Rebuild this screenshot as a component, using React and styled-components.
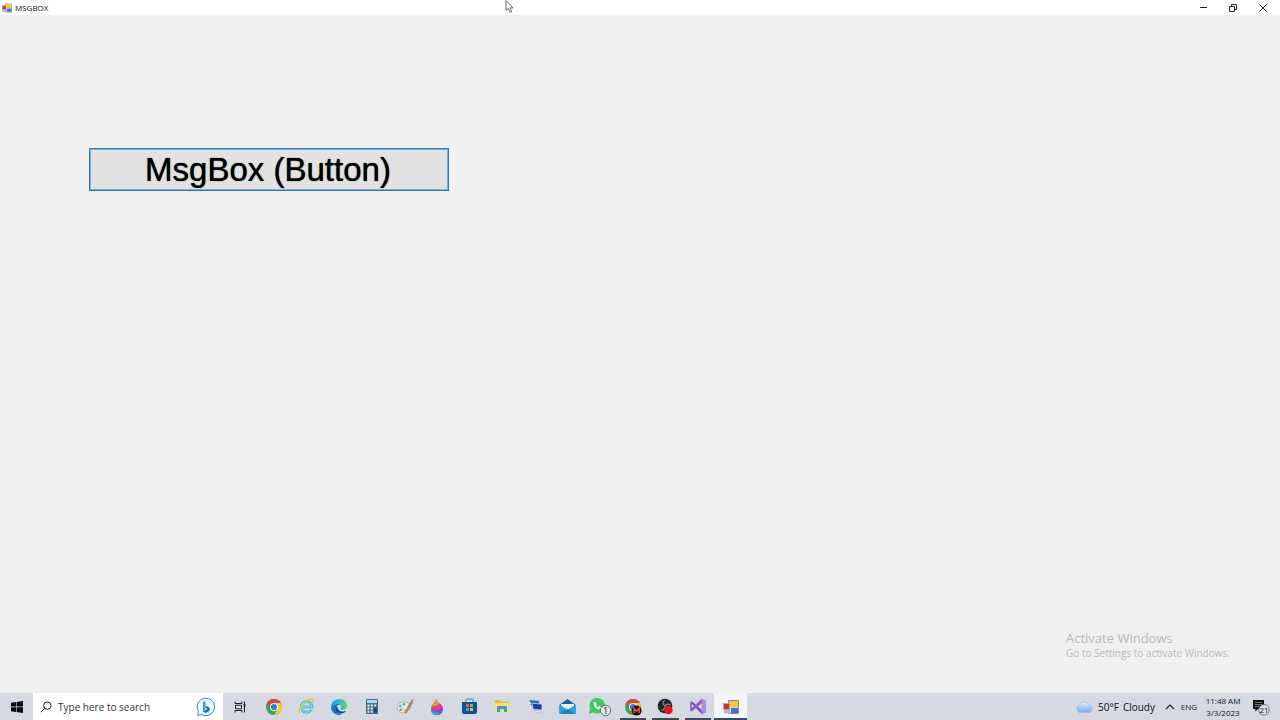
import React, { useState } from 'react';
import styled, { createGlobalStyle } from 'styled-components';

const GlobalStyle = createGlobalStyle`
  * {
    box-sizing: border-box;
  }
  body {
    margin: 0;
    background: #f0f0f0;
    font-family: "Open Sans", "Noto Sans", sans-serif;
    color: #111;
  }
  button, input {
    font: inherit;
    color: inherit;
    border: none;
    margin: 0;
    padding: 0;
    background: transparent;
  }
  svg {
    display: block;
    flex: none;
  }
`

const Desktop = styled.div`
  display: flex;
  flex-direction: column;
  min-height: 100vh;
  position: relative;
`

const TitleBar = styled.header`
  display: flex;
  align-items: center;
  height: 15px;
  padding-left: 2px;
  gap: 3px;
  background: #fff;
`

const Title = styled.h1`
  flex: 1;
  margin: 0;
  font-size: 8px;
  line-height: 14px;
  font-weight: normal;
`

const WindowButton = styled.button`
  display: flex;
  align-items: center;
  justify-content: center;
  width: 30px;
  height: 14px;
`

const WindowButtons = styled.div`
  display: flex;
  padding-right: 2px;
`

const Form = styled.main`
  flex: 1;
  position: relative;
  padding: 133px 89px;
  background: #f0f0f0;
`

const MsgButton = styled.button`
  width: 360px;
  height: 43px;
  padding-right: 2px;
  border: 1px solid #2a7ab2;
  box-shadow: inset 0 0 0 1px #7fb0d0;
  background: #e2e2e2;
  color: #000;
  font-family: "Liberation Sans", Arial, sans-serif;
  font-size: 33px;
  line-height: 40px;
  text-shadow: 0 0 1px #000;
`

const Watermark = styled.aside`
  position: absolute;
  right: 56px;
  bottom: 33px;
  width: 158px;
  color: #b9b9b9;
  font-size: 10px;
  line-height: 14px;
  white-space: nowrap;
  strong {
    display: block;
    font-size: 13px;
    line-height: 16px;
    font-weight: normal;
  }
`

const Pointer = styled.svg`
  position: absolute;
  left: 505px;
  top: 0;
`

const Taskbar = styled.footer`
  display: flex;
  height: 27px;
  background: #d6d9e2;
`

const StartButton = styled.button`
  display: flex;
  align-items: center;
  justify-content: center;
  width: 33px;
`

const SearchBox = styled.label`
  display: flex;
  align-items: center;
  width: 190px;
  padding: 0 7px;
  gap: 6px;
  background: #fff;
  input {
    flex: 1;
    min-width: 0;
    font-size: 10px;
    line-height: 16px;
    outline: none;
  }
  input::placeholder {
    color: #333;
    opacity: 1;
  }
`

const AppList = styled.nav`
  display: grid;
  grid-template-columns: repeat(15, 1fr);
  width: 489px;
  margin-left: 2px;
`

const AppButton = styled.button`
  display: flex;
  align-items: center;
  justify-content: center;
  margin: 0 ${props => (props.$active || !props.$running ? '0' : '3px')};
  border-bottom: 2px solid ${props => (props.$running ? '#3d4a5c' : 'transparent')};
  padding-top: 2px;
  background: ${props => (props.$active ? '#f3f5f8' : 'transparent')};
`

const Tray = styled.div`
  display: flex;
  align-items: center;
  margin-left: auto;
  padding-right: 9px;
  font-size: 10px;
  line-height: 16px;
`

const Weather = styled.button`
  display: flex;
  align-items: center;
  gap: 4px;
  margin-right: 10px;
`

const Language = styled.button`
  width: 28px;
  font-size: 8px;
`

const Clock = styled.time`
  width: 40px;
  margin-right: 10px;
  font-size: 8px;
  line-height: 12px;
  text-align: center;
  white-space: nowrap;
`

const TrayButton = styled.button`
  display: flex;
  align-items: center;
`

const FormIcon = ({ size }) => (
  <svg width={size} height={size} viewBox="0 0 16 16">
    <path d="M5.5 1.5h10v13h-10z" fill="#d9dce0" stroke="#8b8b86" />
    <path d="M6.5 2h8.5v6H6.5z" fill="#f3c83d" />
    <path d="M8 9h7v5H8z" fill="#3f73cc" />
    <path d="M.5 4.5h6v6h-6z" fill="#c9332c" stroke="#b9a09e" />
    <path d="M1 11h6v3.5H1z" fill="#b5b9c2" />
  </svg>
)

const BingIcon = () => (
  <svg width="20" height="20" viewBox="0 0 20 20">
    <path d="M1.6 18.4l.7-4.2A8.7 8.7 0 1 1 6 17.7z" fill="#eef8fd" stroke="#3188cb" />
    <path d="M7 4l2.4 1v7.6L7 14.5z" fill="#24a6dc" />
    <path d="M7 14.5l3.4-2-1.2-3.6c2.6.3 4.6 1.3 4.6 3.3 0 2-2.6 3.5-4.8 3.5z" fill="#1769c7" />
    <path d="M9.4 11l1.9.9-1.9 1.2z" fill="#eef8fd" />
  </svg>
)

const ChromeIcon = ({ badge }) => (
  <svg width="18" height="18" viewBox="0 0 18 18">
    <circle cx="9" cy="9" r="8" fill="#35a853" />
    <path d="M2.1 5A8 8 0 0 1 15.9 5L9 5.3 5.6 11z" fill="#e0433a" />
    <path d="M15.9 5A8 8 0 0 1 9 17l3.5-6L9 5z" fill="#f6c92d" />
    <circle cx="9" cy="9" r="4" fill="#fff" />
    <circle cx="9" cy="9" r="3.1" fill="#3977df" />
    {badge && (
      <>
        <circle cx="12.6" cy="12.6" r="5" fill="#21130e" />
        <path d="M10 15.2v-4.8l2.6 2.8 2.6-2.8v4.8" fill="none" stroke="#e8552c" strokeWidth="1.5" />
      </>
    )}
  </svg>
)

const ExplorerIcon = () => (
  <svg width="17" height="17" viewBox="0 0 17 17">
    <path d="M13.3 11.6A5.4 5.4 0 1 1 14 8.8H5" fill="none" stroke="#45b8e5" strokeWidth="2.8" />
    <path d="M13.3 11.6A5.4 5.4 0 1 1 14 8.8H5" fill="none" stroke="#b5e7f8" strokeWidth=".7" />
    <path d="M2.1 14.8C-1.1 12.1 7.7 1.2 13.6 1c2.1 0 2.1 1.8 1 4" fill="none" stroke="#e6c23c" strokeWidth="1.4" />
  </svg>
)

const EdgeIcon = () => (
  <svg width="18" height="18" viewBox="0 0 18 18">
    <defs>
      <linearGradient id="edgeTop" x1="0" x2="1">
        <stop offset="0" stopColor="#1695d8" />
        <stop offset=".5" stopColor="#2bbfd0" />
        <stop offset="1" stopColor="#65d45c" />
      </linearGradient>
    </defs>
    <path d="M1 9.5A8 8 0 0 1 9 1c5 0 8 3.3 8 6.7 0 2.7-2 4.2-4.5 4.2-2 0-2.6-.8-1.8-1.8C12 8 9.5 6 6.5 6 3.7 6 1.5 7.5 1 9.5z" fill="url(#edgeTop)" />
    <path d="M1 9.4C1.5 7.5 3.8 6 6.5 6c1.3 0 2.5.4 3.3 1C7 7.1 5.6 9 6 11.5c.4 2.5 2.6 5 6 5A8 8 0 0 1 1 9.4z" fill="#147acb" />
    <path d="M7.2 8.2c-1.8 1-2 3.2-.7 5.3 1.6 2.5 4.8 3.5 9.3.1.3-.2 0-.6-.3-.5-3.9 1.5-8-.6-8.3-4.9z" fill="#124d91" />
  </svg>
)

const CalculatorIcon = () => (
  <svg width="14" height="17" viewBox="0 0 14 17">
    <path d="M1 1h12v15H1z" fill="#4d6e83" />
    <path d="M2 2h10v3H2z" fill="#9de1f2" />
    <path d="M2.5 6.5h2v2h-2zm3.3 0h2v2h-2zm3.4 0h2v2h-2zM2.5 9.5h2v2h-2zm3.3 0h2v2h-2zM2.5 12.7h2v2h-2zm3.3 0h2v2h-2z" fill="#e2edf2" />
    <path d="M9.2 9.5h2.5v5.2H9.2z" fill="#173f70" />
  </svg>
)

const PaintIcon = () => (
  <svg width="18" height="17" viewBox="0 0 18 17">
    <path d="M1.3 10.8C0 7 4 3.8 8.5 4c4 .1 6.6 2.4 6.3 5.4-.3 3-3 2.2-4 3.1-1 .8.3 2.2-2.6 2.5-3 .3-6-1.5-6.9-4.2z" fill="#d9eaf0" stroke="#8ca9b5" strokeWidth=".7" />
    <circle cx="4.3" cy="8" r="1.3" fill="#65a6d8" />
    <circle cx="8" cy="6.2" r="1.2" fill="#63ad68" />
    <circle cx="4.8" cy="11.7" r="1.3" fill="#d57c50" />
    <circle cx="8.3" cy="12.5" r="1.1" fill="#d8bf4c" />
    <path d="M8.8 14.5L14 4.8 16.8 1l-.8 4.5L10.4 15z" fill="#ba8c5a" stroke="#846548" strokeWidth=".5" />
  </svg>
)

const DropIcon = () => (
  <svg width="14" height="18" viewBox="0 0 14 18">
    <path d="M6 1C5 4 1 7 1 11.2a6 6 0 0 0 12 0C13 7 8 5 6 1z" fill="#2cacdf" />
    <path d="M6 1C5.3 3.5 3 5.8 1.8 8.3 4 8.6 8 7.7 9.8 5.2 8 4 6.7 3 6 1z" fill="#ee9440" />
    <path d="M1.8 8.3C4 8.6 8 7.7 9.8 5.2c1.4 1.4 2.6 2.8 3 4.6C10 12 5 13 1 11.4c0-1 .3-2.2.8-3.1z" fill="#e33e78" />
    <path d="M1 11.4C5 13 10 12 12.8 9.8c.9 3.4-1.6 6.2-4 7.1C4.5 16.5 1.3 14 1 11.4z" fill="#8a46cc" />
    <path d="M1 11.4c.7 2.5 4 3.6 8.5 2.8-.4 1.4-1.8 2.7-3.5 3A6 6 0 0 1 1 11.4z" fill="#2cacdf" />
  </svg>
)

const StoreIcon = () => (
  <svg width="17" height="17" viewBox="0 0 17 17">
    <path d="M5 5V2.5C5 1.5 5.5 1 6.5 1h4c1 0 1.5.5 1.5 1.5V5" fill="none" stroke="#45afe0" strokeWidth="1.4" />
    <path d="M1 4h15v10q0 2-2 2H3q-2 0-2-2z" fill="#14518a" />
    <path d="M5 6h3v3H5z" fill="#ec5840" />
    <path d="M9 6h3v3H9z" fill="#80c341" />
    <path d="M5 10h3v3H5z" fill="#36aae3" />
    <path d="M9 10h3v3H9z" fill="#f5bd38" />
  </svg>
)

const FolderIcon = () => (
  <svg width="16" height="15" viewBox="0 0 16 15">
    <path d="M1 1h5l1 1.7h8V12H1z" fill="#e9b83f" />
    <path d="M1 4h14v8H1z" fill="#ffdf75" />
    <path d="M3 13V8q0-1 1-1h8q1 0 1 1v5h-3v-3H6v3z" fill="#4199c5" />
  </svg>
)

const RemoteIcon = () => (
  <svg width="17" height="17" viewBox="0 0 17 17">
    <path d="M1 1l12 1.3v7.2L2 8z" fill="#c4d7f0" />
    <path d="M2.5 2l9.5 1.1v5.3L4 7.2z" fill="#416cba" />
    <path d="M5 5.3l10 .8v6L6 11.2z" fill="#1d429b" stroke="#d7e2f1" strokeWidth=".7" />
    <path d="M7 12.3l7 .6 1.5 2.3-7-.8z" fill="#ecf0f7" stroke="#8a9cb8" strokeWidth=".6" />
    <path d="M1 4.8l3 .4M2 9.6l3 .4" stroke="#eef5fb" />
  </svg>
)

const MailIcon = () => (
  <svg width="17" height="17" viewBox="0 0 17 17">
    <path d="M.5 6.8L8.5 1l8 5.8V16H.5z" fill="#17649d" />
    <path d="M2 6h13v6H2z" fill="#e7f4fa" />
    <path d="M.5 6.8l8 5 8-5V16H.5z" fill="#28a1dc" />
    <path d="M.5 16l8-5 8 5z" fill="#1a86c7" />
  </svg>
)

const WhatsAppIcon = () => (
  <svg width="24" height="20" viewBox="0 0 24 20">
    <path d="M.8 17l1.4-5a7.8 7.8 0 1 1 3.4 3.6z" fill="#3ecb5a" />
    <path d="M6 5.2l1.6 2-.6 1.2c.6 1.4 1.6 2.4 3 3l1.1-1 2.2 1.1" fill="none" stroke="#fff" strokeWidth="2.2" />
    <circle cx="17.5" cy="13.5" r="5.2" fill="#dfe4e5" stroke="#555c61" strokeWidth=".9" />
    <text x="17.5" y="16.8" fontSize="9" textAnchor="middle" fill="#111">1</text>
  </svg>
)

const ObsIcon = () => (
  <svg width="17" height="17" viewBox="0 0 17 17">
    <circle cx="8" cy="8" r="7.3" fill="#242529" />
    <path d="M7.7 2.5c-2.3 1.2-2.3 4 .1 5.3M4 11.8c2.4.8 4.4-.9 3.9-3.8M13.2 7.2C12 5.4 9 5.7 7.9 8" fill="none" stroke="#8b8d92" strokeWidth="1.2" />
    <circle cx="11.4" cy="12" r="4.2" fill="#e71519" />
  </svg>
)

const VisualStudioIcon = () => (
  <svg width="18" height="17" viewBox="0 0 18 17">
    <path d="M1 4.2l2-.9L13 12v4.3L3 6v5l-2-.9z" fill="#7b4fb4" />
    <path d="M1 12.5V4.2l1.8-.9v10.2z" fill="#9a72cc" />
    <path d="M3 13.5l-2-1.8L13 .5V5z" fill="#8e61c5" />
    <path d="M12.7.5L17 2.4v12.2l-4.3 2z" fill="#b18ae2" />
  </svg>
)

const CloudIcon = () => (
  <svg width="18" height="14" viewBox="0 0 18 14">
    <defs>
      <linearGradient id="cloud" x2="0" y2="1">
        <stop offset="0" stopColor="#e2efff" />
        <stop offset="1" stopColor="#79aae9" />
      </linearGradient>
    </defs>
    <path d="M4 12.4a3.4 3.4 0 0 1-.3-6.7 5 5 0 0 1 9.4-.9A4 4 0 0 1 13.5 12.4z" fill="url(#cloud)" stroke="#8cb1e3" strokeWidth=".6" />
  </svg>
)

const NoticeIcon = () => (
  <svg width="18" height="18" viewBox="0 0 18 18">
    <path d="M0 2h11v9H5l-2.6 2.6V11H0z" fill="#111" />
    <path d="M2 4.5h7M2 6.5h7M2 8.5h4" stroke="#d6d9e2" strokeWidth=".5" />
    <circle cx="11" cy="11.8" r="5.3" fill="#dce0e5" stroke="#5d6268" strokeWidth=".8" />
    <text x="11" y="14.8" fontSize="8" textAnchor="middle" fill="#111">21</text>
  </svg>
)

const apps = [
  { name: 'Google Chrome', icon: <ChromeIcon /> },
  { name: 'Internet Explorer', icon: <ExplorerIcon /> },
  { name: 'Microsoft Edge', icon: <EdgeIcon /> },
  { name: 'Calculator', icon: <CalculatorIcon /> },
  { name: 'Paint', icon: <PaintIcon /> },
  { name: 'Paint 3D', icon: <DropIcon /> },
  { name: 'Microsoft Store', icon: <StoreIcon /> },
  { name: 'File Explorer', icon: <FolderIcon /> },
  { name: 'Remote Desktop', icon: <RemoteIcon /> },
  { name: 'Mail', icon: <MailIcon /> },
  { name: 'WhatsApp', icon: <WhatsAppIcon /> },
  { name: 'Google Chrome profile', icon: <ChromeIcon badge />, running: true },
  { name: 'OBS Studio', icon: <ObsIcon />, running: true },
  { name: 'Visual Studio', icon: <VisualStudioIcon />, running: true },
  { name: 'MSGBOX', icon: <FormIcon size={16} />, running: true, active: true },
]

export default function App() {
  const [search, setSearch] = useState('')

  return (
    <Desktop>
      <GlobalStyle />
      <TitleBar>
        <FormIcon size={10} />
        <Title>MSGBOX</Title>
        <WindowButtons>
          <WindowButton aria-label="Minimize">
            <svg width="7" height="7" viewBox="0 0 7 7"><path d="M0 3.5h7" stroke="#222" /></svg>
          </WindowButton>
          <WindowButton aria-label="Restore">
            <svg width="8" height="8" viewBox="0 0 8 8"><path d="M.5 2.5h5v5h-5zM2.5 2.5v-2h5v5h-2" fill="none" stroke="#222" /></svg>
          </WindowButton>
          <WindowButton aria-label="Close">
            <svg width="8" height="8" viewBox="0 0 8 8"><path d="M.5.5l7 7M7.5.5l-7 7" stroke="#222" /></svg>
          </WindowButton>
        </WindowButtons>
      </TitleBar>

      <Form>
        <MsgButton type="button">MsgBox (Button)</MsgButton>
        <Watermark>
          <strong>Activate Windows</strong>
          Go to Settings to activate Windows.
        </Watermark>
      </Form>

      <Taskbar>
        <StartButton aria-label="Start">
          <svg width="12" height="12" viewBox="0 0 12 12">
            <path d="M0 1.8l5-.7v4.5H0zM5.6 1L12 0v5.6H5.6zM0 6.3h5v4.6l-5-.7zM5.6 6.3H12V12l-6.4-1z" fill="#080808" />
          </svg>
        </StartButton>
        <SearchBox>
          <svg width="12" height="12" viewBox="0 0 12 12">
            <circle cx="7.3" cy="4.6" r="3.7" fill="none" stroke="#222" />
            <path d="M4.6 7.3L.8 11.2" stroke="#222" />
          </svg>
          <input
            type="text"
            aria-label="Search"
            placeholder="Type here to search"
            value={search}
            onChange={(e) => setSearch(e.target.value)}
          />
          <BingIcon />
        </SearchBox>
        <StartButton aria-label="Task View">
          <svg width="12" height="12" viewBox="0 0 12 12">
            <path d="M1 .5v2h7v-2M1.5 4.2h6v3.6h-6zM1 11.5v-2h7v2M10.5.5v11" fill="none" stroke="#222" />
            <path d="M9.5 3h2v2.5h-2z" fill="#222" />
          </svg>
        </StartButton>
        <AppList>
          {apps.map((app) => (
            <AppButton key={app.name} aria-label={app.name} $running={app.running} $active={app.active}>
              {app.icon}
            </AppButton>
          ))}
        </AppList>
        <Tray>
          <Weather>
            <CloudIcon />
            <span>50°F</span>
            <span>Cloudy</span>
          </Weather>
          <TrayButton aria-label="Show hidden icons">
            <svg width="10" height="6" viewBox="0 0 10 6"><path d="M1 5l4-4 4 4" fill="none" stroke="#222" strokeWidth="1.2" /></svg>
          </TrayButton>
          <Language>ENG</Language>
          <Clock>
            11:48 AM<br />3/3/2023
          </Clock>
          <TrayButton aria-label="Notifications">
            <NoticeIcon />
          </TrayButton>
        </Tray>
      </Taskbar>

      <Pointer width="9" height="14" viewBox="0 0 9 14">
        <path d="M1 .5v10l2.3-2.1 1.8 4 1.5-.7-1.7-3.8H8z" fill="#fff" stroke="#444" strokeWidth=".8" />
      </Pointer>
    </Desktop>
  )
}
